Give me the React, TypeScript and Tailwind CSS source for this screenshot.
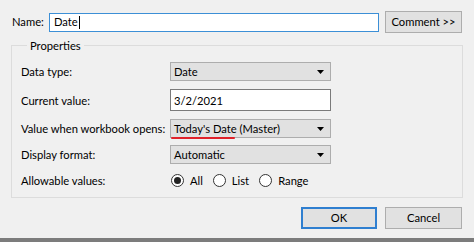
const FONT = "font-['Lato','Noto_Sans',sans-serif]";

function Select({ value, underline }: { value: string; underline?: boolean }) {
  return (
    <div className="relative flex h-[19px] w-[161px] items-center justify-between border border-[#adadad] bg-[#e1e1e1] pl-[3px] pr-[6px]">
      <span>{value}</span>
      <svg width="7" height="4" viewBox="0 0 7 4">
        <path d="M0 0H7L3.5 4Z" fill="#000" />
      </svg>
      {underline && (
        <span className="absolute left-[0px] top-[17px] h-[2px] w-[64px] rounded-full bg-[#e0222a]" />
      )}
    </div>
  );
}

function Radio({ label, checked }: { label: string; checked?: boolean }) {
  return (
    <div className="flex items-center gap-[6px]">
      <span className="flex h-[13px] w-[13px] items-center justify-center rounded-full border border-[#333] bg-white">
        {checked && <span className="h-[7px] w-[7px] rounded-full bg-[#222]" />}
      </span>
      <span>{label}</span>
    </div>
  );
}

function Row({ label, children }: { label: string; children: React.ReactNode }) {
  return (
    <div className="flex items-center">
      <span className="w-[149px] shrink-0 whitespace-nowrap">{label}</span>
      {children}
    </div>
  );
}

export default function App() {
  return (
    <div className={`${FONT} flex h-[242px] w-[474px] flex-col bg-[#f0f0f0] text-[11.2px] leading-none text-[#000]`}>
      {/* Name row */}
      <div className="flex items-center pl-[12px] pt-[11px]">
        <span className="w-[37px]">Name:</span>
        <div className="flex h-[19px] w-[330px] items-center border border-[#3c8fd6] bg-white pl-[4px]">
          <span>Date</span>
          <span className="ml-[1px] h-[13px] w-px bg-black" />
        </div>
        <button className="ml-[6px] h-[22px] w-[77px] border border-[#adadad] bg-[#e1e1e1]">
          Comment &gt;&gt;
        </button>
      </div>

      {/* Properties group */}
      <fieldset className="mx-[11px] mt-[7px] h-[158px] w-[452px] border border-[#dcdcdc] pl-[9px] pt-[11px]">
        <legend className="ml-[6px] px-[3px]">Properties</legend>
        <div className="flex flex-col">
          <Row label="Data type:">
            <Select value="Date" />
          </Row>
          <div className="mt-[8px]">
            <Row label="Current value:">
              <div className="flex h-[22px] w-[161px] items-center border border-[#7a7a7a] bg-white pl-[3px]">
                3/2/2021
              </div>
            </Row>
          </div>
          <div className="mt-[8px]">
            <Row label="Value when workbook opens:">
              <Select value="Today's Date (Master)" underline />
            </Row>
          </div>
          <div className="mt-[7px]">
            <Row label="Display format:">
              <Select value="Automatic" />
            </Row>
          </div>
          <div className="mt-[10px]">
            <Row label="Allowable values:">
              <div className="flex items-center gap-[10px] pl-[1px]">
                <Radio label="All" checked />
                <Radio label="List" />
                <Radio label="Range" />
              </div>
            </Row>
          </div>
        </div>
      </fieldset>

      {/* Buttons */}
      <div className="mt-[9px] flex justify-end gap-[8px] pr-[12px]">
        <button className="h-[22px] w-[76px] border-2 border-[#2f7fd0] bg-[#e1e1e1]">OK</button>
        <button className="h-[22px] w-[77px] border border-[#adadad] bg-[#e1e1e1]">Cancel</button>
      </div>

      <div className="mt-auto h-[4px] bg-[#7c7c7c]" />
    </div>
  );
}
